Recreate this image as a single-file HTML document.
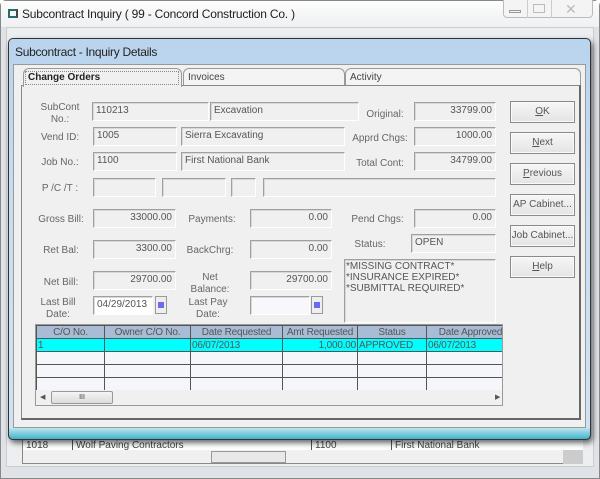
<!DOCTYPE html>
<html><head><style>
*{margin:0;padding:0;box-sizing:border-box}
body{width:600px;height:479px;overflow:hidden;background:#fff;font-family:"Liberation Sans",sans-serif;font-size:10px;color:#333;position:relative}
.a{position:absolute}
.f{position:absolute;background:#f0f0f0;border:1px solid #a0a0a0;border-right-color:#fff;border-bottom-color:#fff;box-shadow:inset 1px 1px 0 #d8d8d8;height:19px;line-height:16px;padding:0 3px;color:#555;white-space:nowrap;overflow:hidden}
.r{text-align:right}
.l{position:absolute;color:#666;text-align:center;line-height:12px}
.b{position:absolute;left:510px;width:65px;height:22px;border:1px solid #8a8a8a;background:linear-gradient(#f6f6f6,#e4e4e4);text-align:center;line-height:20px;color:#555;box-shadow:inset 0 0 0 1px #fafafa}
.cal{position:absolute;width:12px;height:18px;background:#eee;border:1px solid #999}
.cal:after{content:"";position:absolute;left:2px;top:5px;width:6px;height:6px;background:#6b6bf0}
table{border-collapse:collapse;table-layout:fixed}
td{border:1px solid #555;height:13px;padding:0 1px;font-size:10px;color:#555;white-space:nowrap;overflow:hidden;letter-spacing:-0.2px}
</style></head><body>
<div class="a" style="left:0;top:0;width:600px;height:479px;border:1px solid #888;border-radius:6px 6px 0 0;background:#dfe3e8"></div>
<div class="a" style="left:1px;top:1px;width:598px;height:26px;background:linear-gradient(#fdfdfd,#eef0f2)"></div>
<div class="a" style="left:8px;top:9px;width:10px;height:9px;border:2px solid #2a6a6a;border-right-color:#444"></div>
<div class="a" style="left:22px;top:7px;font-size:12px;color:#222;letter-spacing:-0.2px">Subcontract Inquiry ( 99 - Concord Construction Co. )</div>
<div class="a" style="left:503px;top:0;width:90px;height:18px;border:1px solid #bbb;border-top:none;border-radius:0 0 4px 4px;background:#f4f4f4"></div>
<div class="a" style="left:527px;top:0;width:1px;height:18px;background:#ccc"></div>
<div class="a" style="left:551px;top:0;width:1px;height:18px;background:#ccc"></div>
<div class="a" style="left:509px;top:10px;width:12px;height:3px;border:1px solid #999"></div>
<div class="a" style="left:533px;top:4px;width:12px;height:9px;border:1px solid #bbb"></div>
<div class="a" style="left:565px;top:1px;color:#bbb;font-size:14px">✕</div>
<div class="a" style="left:6px;top:27px;width:588px;height:440px;background:#eceef0;border:1px solid #ccc"></div>
<div class="a" style="left:22px;top:436px;width:561px;height:14px;background:#fff;border-left:1px solid #888"></div>
<div class="a" style="left:26px;top:440px;color:#444">1018</div>
<div class="a" style="left:72px;top:436px;height:14px;border-left:1px solid #555;padding-left:3px;padding-top:4px;color:#444">Wolf Paving Contractors</div>
<div class="a" style="left:311px;top:436px;height:14px;border-left:1px solid #555;padding-left:3px;padding-top:4px;color:#444">1100</div>
<div class="a" style="left:391px;top:436px;height:14px;border-left:1px solid #555;padding-left:3px;padding-top:4px;color:#444">First National Bank</div>
<div class="a" style="left:22px;top:450px;width:561px;height:14px;background:#f0f0f0;border-left:1px solid #888;border-bottom:1px solid #888"></div>
<div class="a" style="left:211px;top:451px;width:75px;height:12px;background:#e8e8e8;border:1px solid #999"></div>
<div class="a" style="left:563px;top:450px;width:20px;height:14px;background:#ccc"></div>
<div class="a" style="left:8px;top:38px;width:583px;height:402px;border-radius:5px;background:linear-gradient(#b9d4ee,#c8ddf0 40%,#cfe3f3);border:1px solid #333;box-shadow:2px 3px 6px rgba(0,0,0,.6)"></div>
<div class="a" style="left:8px;top:428px;width:583px;height:12px;border-radius:0 0 5px 5px;background:linear-gradient(#bfe4ef,#3fb4cc);border:1px solid #333;border-top:none"></div>
<div class="a" style="left:15px;top:45px;font-size:12px;color:#222;letter-spacing:-0.3px">Subcontract  -  Inquiry Details</div>
<div class="a" style="left:13px;top:64px;width:573px;height:364px;background:#f0f0f0;border:1px solid #999"></div>
<div class="a" style="left:21px;top:85px;width:560px;height:335px;border:1px solid #888;border-right:2px solid #666;border-bottom:2px solid #666;background:#f0f0f0"></div>
<div class="a" style="left:23px;top:68px;width:159px;height:19px;border:1px solid #999;border-bottom:none;border-radius:6px 6px 0 0;background:#f0f0f0;font-weight:bold;padding:3px 4px;color:#222">Change Orders</div>
<div class="a" style="left:25px;top:71px;width:154px;height:14px;border:1px dotted #888"></div>
<div class="a" style="left:183px;top:68px;width:162px;height:17px;border:1px solid #999;border-bottom:none;border-radius:6px 6px 0 0;background:#f4f4f4;padding:3px 4px;color:#444">Invoices</div>
<div class="a" style="left:345px;top:68px;width:236px;height:17px;border:1px solid #999;border-bottom:none;border-radius:6px 6px 0 0;background:#f4f4f4;padding:3px 4px;color:#444">Activity</div>
<div class="l" style="left:35px;top:102px;width:50px">SubCont<br>No.:</div>
<div class="f" style="left:92px;top:102px;width:117px">110213</div>
<div class="f" style="left:210px;top:102px;width:149px">Excavation</div>
<div class="l" style="left:360px;top:109px;width:50px">Original:</div>
<div class="f r" style="left:414px;top:102px;width:82px">33799.00</div>
<div class="l" style="left:35px;top:132px;width:50px">Vend ID:</div>
<div class="f" style="left:93px;top:127px;width:84px">1005</div>
<div class="f" style="left:181px;top:127px;width:164px">Sierra Excavating</div>
<div class="l" style="left:350px;top:133px;width:60px">Apprd Chgs:</div>
<div class="f r" style="left:414px;top:127px;width:82px">1000.00</div>
<div class="l" style="left:35px;top:157px;width:50px">Job No.:</div>
<div class="f" style="left:93px;top:152px;width:84px">1100</div>
<div class="f" style="left:181px;top:152px;width:164px">First National Bank</div>
<div class="l" style="left:350px;top:158px;width:60px">Total Cont:</div>
<div class="f r" style="left:414px;top:152px;width:82px">34799.00</div>
<div class="l" style="left:35px;top:183px;width:50px">P /C /T :</div>
<div class="f" style="left:93px;top:178px;width:63px"></div>
<div class="f" style="left:162px;top:178px;width:64px"></div>
<div class="f" style="left:231px;top:178px;width:25px"></div>
<div class="f" style="left:263px;top:178px;width:233px"></div>
<div class="l" style="left:36px;top:214px;width:50px">Gross Bill:</div>
<div class="f r" style="left:93px;top:209px;width:83px">33000.00</div>
<div class="l" style="left:186px;top:214px;width:52px">Payments:</div>
<div class="f r" style="left:250px;top:209px;width:82px">0.00</div>
<div class="l" style="left:350px;top:214px;width:55px">Pend Chgs:</div>
<div class="f r" style="left:414px;top:209px;width:82px">0.00</div>
<div class="l" style="left:36px;top:245px;width:50px">Ret Bal:</div>
<div class="f r" style="left:93px;top:240px;width:83px">3300.00</div>
<div class="l" style="left:186px;top:245px;width:48px">BackChrg:</div>
<div class="f r" style="left:250px;top:240px;width:82px">0.00</div>
<div class="l" style="left:350px;top:239px;width:40px">Status:</div>
<div class="f" style="left:411px;top:234px;width:85px">OPEN</div>
<div class="l" style="left:36px;top:277px;width:50px">Net Bill:</div>
<div class="f r" style="left:93px;top:271px;width:83px">29700.00</div>
<div class="l" style="left:186px;top:272px;width:48px">Net<br>Balance:</div>
<div class="f r" style="left:250px;top:271px;width:82px">29700.00</div>
<div class="f" style="left:344px;top:259px;width:152px;height:64px;line-height:11px;padding:1px">*MISSING CONTRACT*<br>*INSURANCE EXPIRED*<br>*SUBMITTAL REQUIRED*</div>
<div class="l" style="left:36px;top:297px;width:44px">Last Bill<br>Date:</div>
<div class="f" style="left:93px;top:296px;width:60px;background:#fff">04/29/2013</div>
<div class="cal" style="left:155px;top:296px"></div>
<div class="l" style="left:186px;top:297px;width:44px">Last Pay<br>Date:</div>
<div class="f" style="left:250px;top:296px;width:60px;background:#f8f8fc"></div>
<div class="cal" style="left:311px;top:296px"></div>
<div class="a" style="left:35px;top:324px;width:468px;height:82px;background:#f4f6fa;border:1px solid #999;overflow:hidden">
<table style="width:478px">
<colgroup><col style="width:68px"><col style="width:86px"><col style="width:92px"><col style="width:75px"><col style="width:69px"><col style="width:88px"></colgroup>
<tr style="background:#a8bcd6"><td style="text-align:center">C/O No.</td><td style="text-align:center">Owner C/O No.</td><td style="text-align:center">Date Requested</td><td style="text-align:center">Amt Requested</td><td style="text-align:center">Status</td><td style="text-align:center">Date Approved</td></tr>
<tr style="background:#00ffff"><td>1</td><td></td><td>06/07/2013</td><td style="text-align:right">1,000.00</td><td>APPROVED</td><td>06/07/2013</td></tr>
<tr><td></td><td></td><td></td><td></td><td></td><td></td></tr>
<tr><td></td><td></td><td></td><td></td><td></td><td></td></tr>
<tr><td></td><td></td><td></td><td></td><td></td><td></td></tr>
</table>
<div class="a" style="left:0;top:65px;width:468px;height:16px;background:#f0f0f0"></div>
<div class="a" style="left:4px;top:68px;font-size:7px;color:#555">◀</div>
<div class="a" style="left:459px;top:68px;font-size:7px;color:#555">▶</div>
<div class="a" style="left:15px;top:66px;width:62px;height:13px;border:1px solid #999;border-radius:2px;background:linear-gradient(#f4f4f4,#dcdcdc);text-align:center;font-size:7px;line-height:11px">III</div>
</div>
<div class="b" style="top:101px"><u>O</u>K</div>
<div class="b" style="top:132px"><u>N</u>ext</div>
<div class="b" style="top:163px"><u>P</u>revious</div>
<div class="b" style="top:194px">AP Cabinet...</div>
<div class="b" style="top:225px">Job Cabinet...</div>
<div class="b" style="top:256px"><u>H</u>elp</div>
</body></html>
